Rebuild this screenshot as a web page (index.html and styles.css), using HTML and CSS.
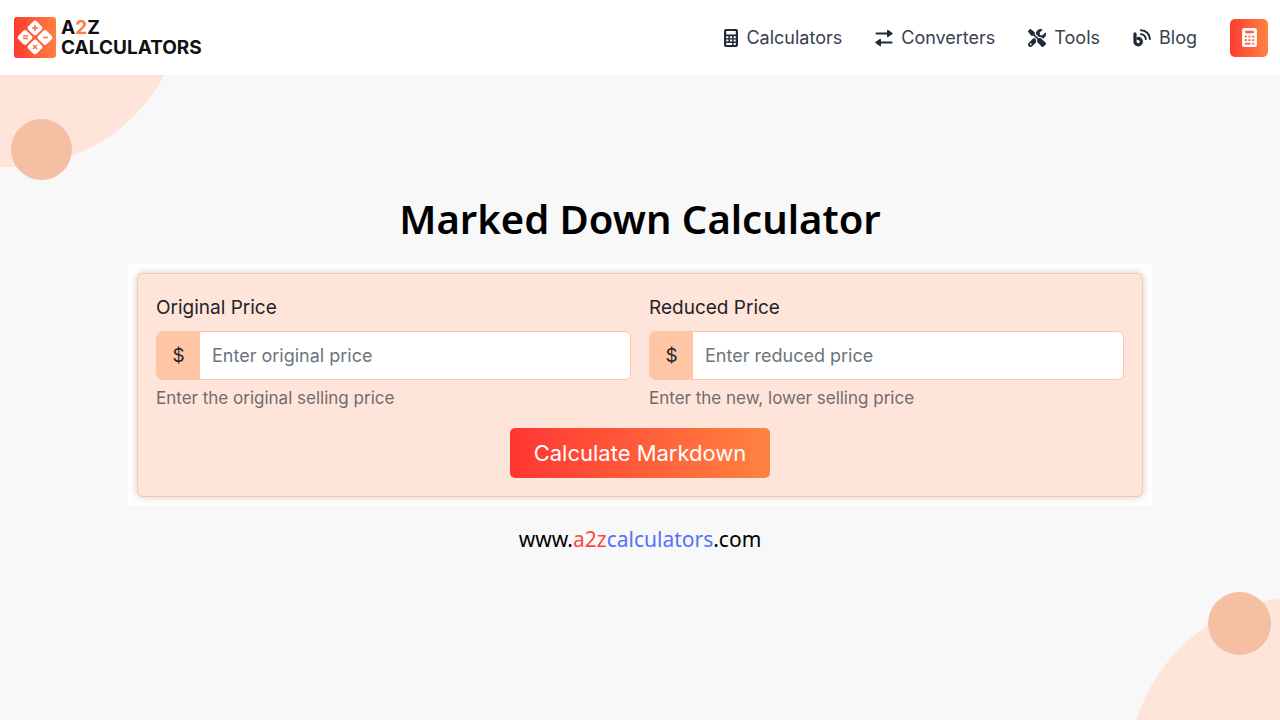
FILE: index.html
```html
<!DOCTYPE html>
<html lang="en">
<head>
    <meta charset="UTF-8">
    <meta name="viewport" content="width=device-width, initial-scale=1.0">
    <title>Marked Down Calculator - A2Z Calculators</title>
    <link rel="stylesheet" href="styles.css">
</head>
<body>
<header class="site-header">
    <a class="logo" href="#">
        <svg class="logo-mark" viewBox="0 0 42 42" aria-hidden="true">
            <defs>
                <linearGradient id="logo-gradient">
                    <stop offset="0" stop-color="#ff3a30"/>
                    <stop offset="1" stop-color="#ff8040"/>
                </linearGradient>
            </defs>
            <rect width="42" height="41" rx="3" fill="url(#logo-gradient)"/>
            <g fill="#fff">
                <rect x="15" y="5" width="12" height="12" rx="3" transform="rotate(45 21 11)"/>
                <rect x="5" y="14.500" width="12" height="12" rx="3" transform="rotate(45 11 20.500)"/>
                <rect x="25" y="14.500" width="12" height="12" rx="3" transform="rotate(45 31 20.500)"/>
                <rect x="15" y="24" width="12" height="12" rx="3" transform="rotate(45 21 30)"/>
            </g>
            <g stroke="#ff6a4a" stroke-width="1.500" fill="none">
                <path d="M21 8v6M18 11h6"/>
                <path d="M9 19h5M9 21.500h5"/>
                <path d="M29 20.500h5"/>
                <path d="M19 28l4 4M23 28l-4 4"/>
            </g>
        </svg>
        <span class="logo-text">A<span class="logo-accent">2</span>Z<br>CALCULATORS</span>
    </a>
    <nav class="main-nav">
        <a href="#">
            <svg class="nav-icon calc-icon" viewBox="0 0 14 18" aria-hidden="true">
                <path fill="currentColor" fill-rule="evenodd" d="M2 0h10a2 2 0 0 1 2 2v14a2 2 0 0 1-2 2H2a2 2 0 0 1-2-2V2a2 2 0 0 1 2-2zM2.200 2v3.600h9.600V2zM2.200 7.200v2h2.200v-2zM5.900 7.200v2h2.200v-2zM9.600 7.200v2h2.200v-2zM2.200 10.600v2h2.200v-2zM5.900 10.600v2h2.200v-2zM9.600 10.600v2h2.200v-2zM2.200 14v2h5.900v-2zM9.600 14v2h2.200v-2z"/>
            </svg>
            Calculators
        </a>
        <a href="#">
            <svg class="nav-icon" viewBox="0 0 18 18" aria-hidden="true">
                <path d="M1.500 4.500h12M16.500 13.500h-12" fill="none" stroke="currentColor" stroke-width="2.200" stroke-linecap="round"/>
                <path d="M12.800 1.500L17 4.500l-4.200 3zM5.200 10.500L1 13.500l4.200 3z" fill="currentColor" stroke="currentColor" stroke-width="1.500" stroke-linejoin="round"/>
            </svg>
            Converters
        </a>
        <a href="#">
            <svg class="nav-icon" viewBox="0 0 512 512" aria-hidden="true">
                <path fill="currentColor" d="M78.600 5C69.100-2.400 55.600-1.500 47 7L7 47c-8.500 8.500-9.400 22-2.100 31.600l80 104c4.500 5.900 11.600 9.400 19 9.400h54.100l109 109c-14.700 29-10 65.400 14.300 89.600l112 112c12.500 12.500 32.800 12.500 45.300 0l64-64c12.500-12.500 12.500-32.800 0-45.300l-112-112c-24.200-24.200-60.600-29-89.600-14.300l-109-109V104c0-7.500-3.500-14.500-9.400-19L78.600 5zM19.900 396.100C7.200 408.800 0 426.100 0 444.100C0 481.600 30.400 512 67.900 512c18 0 35.300-7.200 48-19.900L233.700 374.300c-7.800-20.900-9-43.600-3.600-65.100l-61.700-61.700L19.900 396.100zM512 144c0-10.500-1.100-20.700-3.200-30.500c-2.400-11.200-16.100-14.100-24.200-6l-63.900 63.900c-3 3-7.100 4.700-11.300 4.700H352c-8.800 0-16-7.200-16-16V102.600c0-4.200 1.700-8.300 4.700-11.300l63.900-63.900c8.100-8.100 5.200-21.800-6-24.200C388.700 1.100 378.500 0 368 0C288.500 0 224 64.500 224 144l0 .8 85.300 85.300c36-9.100 75.800 .5 104 28.700L429 274.500c49-23 83-72.800 83-130.500zM56 432a24 24 0 1 1 48 0 24 24 0 1 1-48 0z"/>
            </svg>
            Tools
        </a>
        <a href="#">
            <svg class="nav-icon" viewBox="0 0 18 18" aria-hidden="true">
                <path d="M2 4.800v8.200a3.200 3.200 0 1 0 3.200-3.600" fill="none" stroke="currentColor" stroke-width="3.200" stroke-linecap="round" stroke-linejoin="round"/>
                <path d="M8 1.200A9 9 0 0 1 16.900 10M8 5.300A4.900 4.900 0 0 1 12.800 10" fill="none" stroke="currentColor" stroke-width="2" stroke-linecap="round"/>
            </svg>
            Blog
        </a>
        <button class="calc-btn" type="button" aria-label="Open calculator">
            <svg viewBox="0 0 14 18" aria-hidden="true">
                <path fill="currentColor" fill-rule="evenodd" d="M2 0h10a2 2 0 0 1 2 2v14a2 2 0 0 1-2 2H2a2 2 0 0 1-2-2V2a2 2 0 0 1 2-2zM3 2.500v2.500h8V2.500zM2.500 7.400v1.700h2V7.400zM6 7.400v1.700h2V7.400zM9.500 7.400v1.700h2V7.400zM2.500 10.700v1.700h2v-1.700zM6 10.700v1.700h2v-1.700zM9.500 10.700v1.700h2v-1.700zM2.500 14v1.700H8V14zM9.500 14v1.700h2V14z"/>
            </svg>
        </button>
    </nav>
</header>

<main class="hero">
    <!-- Background circles -->
    <div class="circle circle-large circle-top"></div>
    <div class="circle circle-small circle-top-small"></div>
    <div class="circle circle-large circle-bottom"></div>
    <div class="circle circle-small circle-bottom-small"></div>

    <h1>Marked Down Calculator</h1>
    <div class="form-frame">
        <form class="calculator-form">
            <div class="fields">
                <div class="field">
                    <label for="original-price">Original Price</label>
                    <div class="input-group">
                        <span class="currency">$</span>
                        <input type="text" id="original-price" inputmode="decimal" placeholder="Enter original price" aria-describedby="original-help">
                    </div>
                    <p class="help" id="original-help">Enter the original selling price</p>
                </div>
                <div class="field">
                    <label for="reduced-price">Reduced Price</label>
                    <div class="input-group">
                        <span class="currency">$</span>
                        <input type="text" id="reduced-price" inputmode="decimal" placeholder="Enter reduced price" aria-describedby="reduced-help">
                    </div>
                    <p class="help" id="reduced-help">Enter the new, lower selling price</p>
                </div>
            </div>
            <button class="submit-btn" type="button">Calculate Markdown</button>
        </form>
    </div>
    <a class="site-url" href="#">www.<span class="url-red">a2z</span><span class="url-blue">calculators</span>.com</a>
</main>
</body>
</html>
```
FILE: styles.css
```css
* {
    box-sizing: border-box;
}
body {
    margin: 0;
    min-height: 100vh;
    display: flex;
    flex-direction: column;
    font-family: Inter, "Liberation Sans", sans-serif;
    background-color: #f8f8f8;
    color: #212529;
}
a {
    color: inherit;
    text-decoration: none;
}

/* Header */
.site-header {
    display: flex;
    align-items: center;
    justify-content: space-between;
    height: 75px;
    padding: 0 12px 0 14px;
    background-color: #ffffff;
}
.logo {
    display: flex;
    align-items: center;
    gap: 5px;
}
.logo-mark {
    width: 42px;
    height: 42px;
}
.logo-text {
    font-size: 19px;
    line-height: 20px;
    font-weight: 700;
    color: #111111;
}
.logo-accent {
    color: #ff7a45;
}
.main-nav {
    display: flex;
    align-items: center;
    gap: 33px;
    font-size: 18px;
    color: #374151;
}
.main-nav a {
    display: flex;
    align-items: center;
    gap: 8px;
}
.nav-icon {
    width: 18px;
    height: 18px;
    color: #1f2937;
}
.calc-icon {
    width: 14px;
}
.calc-btn {
    display: flex;
    align-items: center;
    justify-content: center;
    width: 38px;
    height: 38px;
    padding: 0;
    border: none;
    border-radius: 5px;
    background: linear-gradient(90deg, #ff3a33, #ff8340);
    color: #ffffff;
    cursor: pointer;
}
.calc-btn svg {
    width: 15px;
    height: 19px;
}

/* Hero */
.hero {
    position: relative;
    flex: 1;
    display: flex;
    flex-direction: column;
    align-items: center;
    padding: 116px 24px 48px;
    overflow: hidden;
}
.hero h1,
.form-frame,
.site-url {
    position: relative;
}
.hero h1 {
    margin: 0 0 17px;
    font-family: "Noto Sans", sans-serif;
    font-size: 40px;
    line-height: 56px;
    font-weight: 600;
    color: #000000;
}
.circle {
    position: absolute;
    border-radius: 50%;
}
.circle-large {
    width: 348px;
    height: 348px;
    background-color: #ffe4da;
}
.circle-small {
    background-color: #f4bfa3;
}
.circle-top {
    top: -256px;
    left: -163px;
}
.circle-top-small {
    top: 44px;
    left: 11px;
    width: 61px;
    height: 61px;
}
.circle-bottom {
    right: -197px;
    bottom: -225px;
}
.circle-bottom-small {
    right: 9px;
    bottom: 65px;
    width: 63px;
    height: 63px;
}

/* Form */
.form-frame {
    width: 80vw;
    padding: 9px;
    background-color: #ffffff;
}
.calculator-form {
    display: flex;
    flex-direction: column;
    align-items: center;
    gap: 18px;
    padding: 20px 18px 18px;
    border: 1px solid #ffc4ad;
    border-radius: 6px;
    background-color: #ffe4da;
    box-shadow: 0 0 9px rgba(0, 0, 0, 0.2);
}
.fields {
    display: grid;
    grid-template-columns: 1fr 1fr;
    gap: 18px;
    width: 100%;
}
.field label {
    display: block;
    margin-bottom: 10px;
    font-size: 19px;
    line-height: 27px;
}
.input-group {
    display: flex;
    height: 49px;
    border: 1px solid #ffc4ad;
    border-radius: 6px;
    background-color: #ffffff;
    overflow: hidden;
}
.currency {
    display: flex;
    align-items: center;
    justify-content: center;
    width: 43px;
    background-color: #ffc5a5;
    font-size: 19px;
}
.input-group input {
    flex: 1;
    min-width: 0;
    padding: 0 12px;
    border: none;
    background: none;
    font-family: inherit;
    font-size: 18px;
    color: #212529;
}
.input-group input::placeholder {
    color: #6c757d;
    opacity: 1;
}
.help {
    margin: 6px 0 0;
    font-size: 17px;
    line-height: 24px;
    color: #6f6c6f;
}
.submit-btn {
    height: 50px;
    padding: 0 24px;
    border: none;
    border-radius: 5px;
    background: linear-gradient(90deg, #ff3633, #ff8340);
    font-family: inherit;
    font-size: 22px;
    color: #ffffff;
    cursor: pointer;
}
.site-url {
    margin-top: 19px;
    font-family: "Noto Sans", sans-serif;
    font-size: 21px;
    line-height: 28px;
    color: #000000;
}
.url-red {
    color: #ff4a3d;
}
.url-blue {
    color: #5271ff;
}

@media (max-width: 800px) {
    .site-header {
        height: auto;
        flex-wrap: wrap;
        padding: 12px;
    }
    .main-nav {
        flex-wrap: wrap;
        gap: 16px;
    }
    .fields {
        grid-template-columns: 1fr;
    }
}
```
